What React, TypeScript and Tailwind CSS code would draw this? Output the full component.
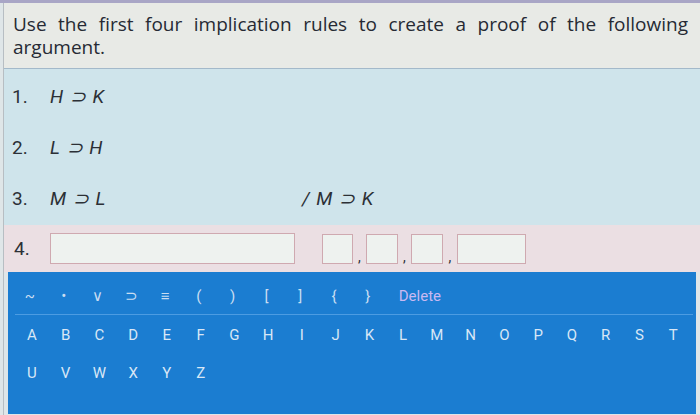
const symbols = ["~", "•", "∨", "⊃", "≡", "(", ")", "[", "]", "{", "}"]
const row2 = "ABCDEFGHIJKLMNOPQRST".split("")
const row3 = "UVWXYZ".split("")

function Premise({ n, children, right }: { n: string; children: React.ReactNode; right?: React.ReactNode }) {
  return (
    <div className="flex h-[51px] items-center text-[19px] text-[#2c3036]">
      <span className="w-[46px] pl-[8px]">{n}</span>
      <span className="w-[252px] italic tracking-[1px]">{children}</span>
      {right && <span className="italic tracking-[1px]">{right}</span>}
    </div>
  )
}

function Box({ className }: { className: string }) {
  return <div className={`h-[30px] border border-[#cfa9b0] bg-[#eef2ef] ${className}`} />
}

export default function App() {
  return (
    <div className="h-[415px] w-[700px] overflow-hidden bg-[#dfe6e8] font-['Roboto',sans-serif]">
      <div className="h-[3px] bg-[#a9a6c6]" />
      <div className="ml-[3px] h-[412px] border-l border-[#b7bec3]">
        {/* question */}
        <div className="h-[66px] border-b border-[#a3b9ca] bg-[#e8eae6] pl-[9px] pr-[12px] pt-[10px]">
          <p className="text-justify font-['Open_Sans',sans-serif] text-[19px] font-medium leading-[23px] text-[#262a34]">
            Use the first four implication rules to create a proof of the following argument.
          </p>
        </div>

        {/* premises */}
        <div className="bg-[#cfe4eb] pt-[3px]">
          <Premise n="1.">H ⊃ K</Premise>
          <Premise n="2.">L ⊃ H</Premise>
          <Premise n="3." right="/ M ⊃ K">M ⊃ L</Premise>
        </div>

        {/* answer line */}
        <div className="flex h-[47px] items-center bg-[#ebdfe3] text-[19px] text-[#2c3036]">
          <span className="w-[46px] pl-[10px] pt-[2px]">4.</span>
          <div className="h-[31px] w-[245px] border border-[#cfa9b0] bg-[#eef2ef]" />
          <div className="ml-[27px] flex items-end">
            <Box className="w-[31px]" />
            <span className="w-[13px] text-center text-[14px] leading-none">,</span>
            <Box className="w-[32px]" />
            <span className="w-[13px] text-center text-[14px] leading-none">,</span>
            <Box className="w-[32px]" />
            <span className="w-[14px] text-center text-[14px] leading-none">,</span>
            <Box className="w-[69px]" />
          </div>
        </div>

        {/* keyboard */}
        <div className="ml-[4px] h-[142px] w-[688px] bg-[#1b7dd1] pl-[5px]">
          <div className="flex h-[42px] items-center pt-[6px]">
            {symbols.map((s) => (
              <span key={s} className="w-[33.8px] text-center text-[15px] text-[#c9ddf1]">
                {s}
              </span>
            ))}
            <span className="ml-[14px] text-[15px] text-[#c9b9f2]">Delete</span>
          </div>
          <div className="ml-[2px] mr-[3px] h-px bg-[#4c9ce2]" />
          <div className="flex h-[40px] items-center pl-[2px]">
            {row2.map((c) => (
              <span key={c} className="w-[33.75px] text-center text-[15px] text-[#d8e7f6]">
                {c}
              </span>
            ))}
          </div>
          <div className="flex h-[36px] items-center pl-[2px]">
            {row3.map((c) => (
              <span key={c} className="w-[33.75px] text-center text-[15px] text-[#d8e7f6]">
                {c}
              </span>
            ))}
          </div>
        </div>
      </div>
    </div>
  )
}
